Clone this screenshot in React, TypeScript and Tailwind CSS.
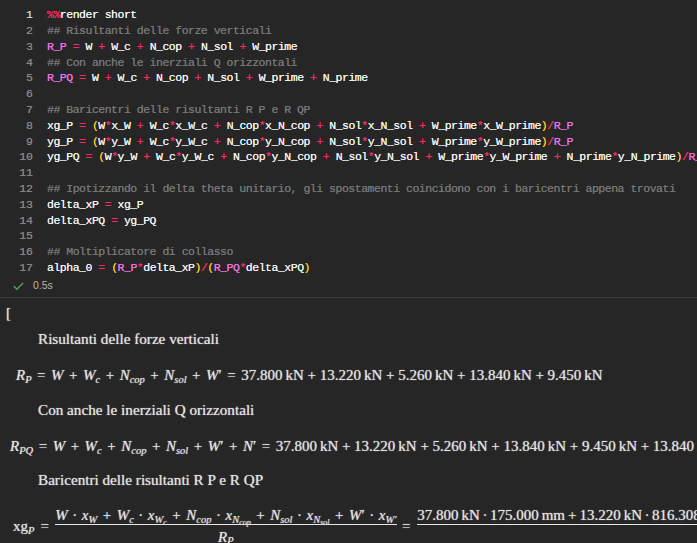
import React from 'react';
import { Check } from 'lucide-react';

const lines = [
  '%%render short',
  '## Risultanti delle forze verticali',
  'R_P = W + W_c + N_cop + N_sol + W_prime',
  '## Con anche le inerziali Q orizzontali',
  'R_PQ = W + W_c + N_cop + N_sol + W_prime + N_prime',
  '',
  '## Baricentri delle risultanti R P e R QP',
  'xg_P = (W*x_W + W_c*x_W_c + N_cop*x_N_cop + N_sol*x_N_sol + W_prime*x_W_prime)/R_P',
  'yg_P = (W*y_W + W_c*y_W_c + N_cop*y_N_cop + N_sol*y_N_sol + W_prime*y_W_prime)/R_P',
  'yg_PQ = (W*y_W + W_c*y_W_c + N_cop*y_N_cop + N_sol*y_N_sol + W_prime*y_W_prime + N_prime*y_N_prime)/R_PQ',
  '',
  '## Ipotizzando il delta theta unitario, gli spostamenti coincidono con i baricentri appena trovati',
  'delta_xP = xg_P',
  'delta_xPQ = yg_PQ',
  '',
  '## Moltiplicatore di collasso',
  'alpha_0 = (R_P*delta_xP)/(R_PQ*delta_xPQ)',
];

const Token: React.FC<{ text: string }> = ({ text }) => {
  if (/^(R_P|R_PQ)$/.test(text)) return <span className="text-[#ec6fe6]">{text}</span>;
  if (/^[=+*/%]+$/.test(text)) return <span className="text-[#fb2a62]">{text}</span>;
  if (/^[()]$/.test(text)) return <span className="text-[#f7c61c]">{text}</span>;
  return <span>{text}</span>;
};

const CodeLine: React.FC<{ text: string; n: number }> = ({ text, n }) => (
  <div className="flex h-[15.8px] items-center">
    <div className={`w-[33px] shrink-0 text-right tracking-normal ${n === 1 ? 'text-[#d0d0d0]' : 'text-[#858585]'}`}>{n}</div>
    <div className="ml-[14px] whitespace-pre text-[#f2f2f2]">
      {text.startsWith('##') ? (
        <span className="text-[#757575]">{text}</span>
      ) : (
        text.split(/(R_PQ|R_P(?![a-zA-Z_])|[=+*/%]+|[()])/).filter(Boolean).map((t, i) => <Token key={i} text={t} />)
      )}
    </div>
  </div>
);

const V: React.FC<{ c: string; s?: string; prime?: boolean; ss?: string }> = ({ c, s, prime, ss }) => (
  <span className="italic">
    {c}
    {prime && <span className="not-italic">′</span>}
    {s && (
      <sub className="text-[10.5px] leading-none">
        {s}
        {ss && <sub className="text-[8px] leading-none">{ss}</sub>}
      </sub>
    )}
  </span>
);

// symbolic operators are set wider than the numeric ones
const Op: React.FC<{ c: string }> = ({ c }) => <span className="mx-[5.5px] not-italic">{c}</span>;
const NumOp: React.FC<{ c: string }> = ({ c }) => <span className="mx-[3.7px]">{c}</span>;
const Dot = () => <span className="mx-[4.5px] not-italic">·</span>;

const Kn: React.FC<{ v: string; u?: string }> = ({ v, u = 'kN' }) => (
  <span>
    {v}
    <span className="ml-[3px]">{u}</span>
  </span>
);

const Heading: React.FC<{ children: React.ReactNode; h: string }> = ({ children, h }) => (
  <div className={`flex items-center pl-[38px] text-[15.2px] ${h}`}>{children}</div>
);

const Sum = () => (
  <>
    <V c="W" />
    <Op c="+" />
    <V c="W" s="c" />
    <Op c="+" />
    <V c="N" s="cop" />
    <Op c="+" />
    <V c="N" s="sol" />
    <Op c="+" />
    <V c="W" prime />
  </>
);

const Values = () => (
  <>
    <Kn v="37.800" />
    <NumOp c="+" />
    <Kn v="13.220" />
    <NumOp c="+" />
    <Kn v="5.260" />
    <NumOp c="+" />
    <Kn v="13.840" />
    <NumOp c="+" />
    <Kn v="9.450" />
  </>
);

export default function App() {
  return (
    <div className="h-[543px] w-[697px] overflow-hidden bg-[#262626] text-[#e2e2e2]">
      <div className="pt-[7px] font-['Liberation_Mono',monospace] text-[11.5px] tracking-[-0.49px] [text-shadow:0_0_0.6px_currentColor]">
        {lines.map((l, i) => (
          <CodeLine key={i} text={l} n={i + 1} />
        ))}
      </div>

      <div className="flex h-[22px] items-center border-b border-[#3c3c3c] font-['Liberation_Sans',sans-serif]">
        <Check className="ml-[12px] h-[13px] w-[13px] text-[#4fa84f]" strokeWidth={2.5} />
        <span className="ml-[8px] text-[10.5px] text-[#b4b4b4]">0.5s</span>
      </div>

      <div className="whitespace-nowrap font-['Liberation_Serif',serif] text-[15px] [text-shadow:0_0_1px_#bdbdbd]">
        <div className="flex h-[31px] items-center pl-[6px]">[</div>
        <Heading h="h-[22px]">Risultanti delle forze verticali</Heading>

        <div className="flex h-[50px] items-center pl-[16px]">
          <span>
            <V c="R" s="P" />
            <Op c="=" />
            <Sum />
            <Op c="=" />
            <Values />
          </span>
        </div>

        <Heading h="h-[20px]">Con anche le inerziali Q orizzontali</Heading>

        <div className="flex h-[52px] items-center pl-[10px]">
          <span>
            <V c="R" s="PQ" />
            <Op c="=" />
            <Sum />
            <Op c="+" />
            <V c="N" prime />
            <Op c="=" />
            <Values />
            <NumOp c="+" />
            <Kn v="13.840" />
          </span>
        </div>

        <Heading h="h-[16px]">Baricentri delle risultanti R P e R QP</Heading>

        <div className="flex items-center pl-[13px] pt-[19px]">
          <span>
            xg
            <V c="" s="P" />
          </span>
          <span className="mx-[6px]">=</span>
          <div className="flex shrink-0 flex-col items-center">
            <div className="flex h-[17px] w-[342px] items-center justify-center border-b border-[#e6e6e6]">
              <span>
                <V c="W" />
                <Dot />
                <V c="x" s="W" />
                <Op c="+" />
                <V c="W" s="c" />
                <Dot />
                <V c="x" s="W" ss="c" />
                <Op c="+" />
                <V c="N" s="cop" />
                <Dot />
                <V c="x" s="N" ss="cop" />
                <Op c="+" />
                <V c="N" s="sol" />
                <Dot />
                <V c="x" s="N" ss="sol" />
                <Op c="+" />
                <V c="W" prime />
                <Dot />
                <V c="x" s="W′" />
              </span>
            </div>
            <div className="mt-[1px] h-[20px]">
              <V c="R" s="P" />
            </div>
          </div>
          <span className="ml-[5px] mr-[7px]">=</span>
          <div className="flex shrink-0 flex-col self-start">
            <div className="flex h-[17px] w-[400px] items-center border-b border-[#e6e6e6]">
              <span>
                <Kn v="37.800" />
                <span className="mx-[2.5px]">·</span>
                <Kn v="175.000" u="mm" />
                <span className="mx-[3px]">+</span>
                <Kn v="13.220" />
                <span className="mx-[2.5px]">·</span>
                <span>816.308</span>
              </span>
            </div>
          </div>
        </div>
      </div>
    </div>
  );
}
